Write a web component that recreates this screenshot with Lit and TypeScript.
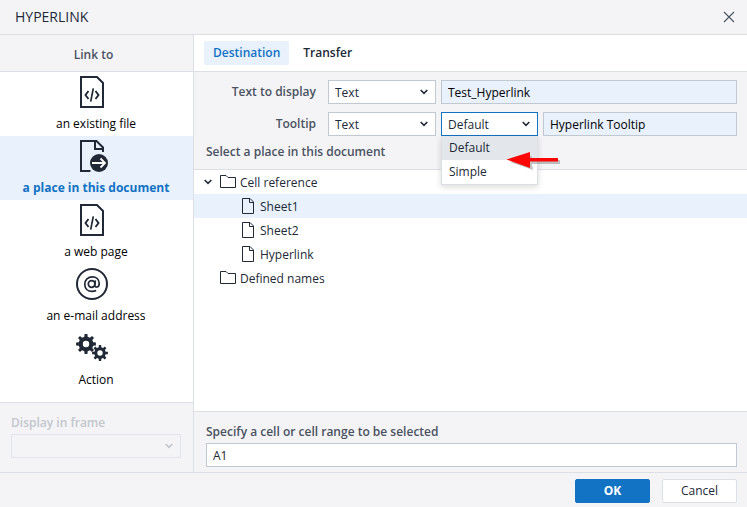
import { LitElement, html, css, svg, nothing } from "lit";
import { customElement, state } from "lit/decorators.js";
import { classMap } from "lit/directives/class-map.js";

/** Outline of a cog wheel with a round hole, as SVG path data. */
function cog(cx: number, cy: number, outer: number, inner: number, hole: number, teeth = 8): string {
  const step = (Math.PI * 2) / teeth;
  const at = (r: number, a: number) =>
    `${(cx + r * Math.cos(a)).toFixed(2)} ${(cy + r * Math.sin(a)).toFixed(2)}`;
  const points: string[] = [];
  for (let i = 0; i < teeth; i++) {
    const a = i * step;
    points.push(
      at(inner, a - step * 0.29),
      at(outer, a - step * 0.18),
      at(outer, a + step * 0.18),
      at(inner, a + step * 0.29),
    );
  }
  return (
    `M${points.join("L")}Z` +
    `M${cx - hole} ${cy}a${hole} ${hole} 0 1 0 ${hole * 2} 0a${hole} ${hole} 0 1 0 ${-hole * 2} 0Z`
  );
}

const codeFile = svg`
  <path d="M5 1H21L27 7V31H5Z" fill="none" stroke="currentColor" stroke-width="2"/>
  <path d="M12.500 15L9.500 19L12.500 23M19.500 15L22.500 19L19.500 23" fill="none" stroke="currentColor" stroke-width="1.9"/>
  <path d="M17.300 12.300L14.700 25.700" fill="none" stroke="currentColor" stroke-width="1.7"/>`;

const placeFile = svg`
  <path d="M14.500 31H5V1H20.500L27 7.500V12" fill="none" stroke="currentColor" stroke-width="2"/>
  <path d="M19 1V9H27" fill="none" stroke="currentColor" stroke-width="2"/>
  <circle cx="23" cy="23" r="9" fill="currentColor"/>
  <path d="M16 23H29M24.500 18.500L29 23L24.500 27.500" fill="none" stroke="#fff" stroke-width="1.8"/>`;

const mail = svg`
  <circle cx="16" cy="16" r="15" fill="none" stroke="currentColor" stroke-width="2"/>
  <circle cx="15.600" cy="16" r="3.300" fill="none" stroke="currentColor" stroke-width="1.7"/>
  <path d="M19.300 12.300L18.800 17.400C18.700 19.800 23.200 20 23.200 15.400C23.200 11.400 20.200 8.800 16.300 8.800C12 8.800 8.800 12 8.800 16.200C8.800 20.600 11.800 23.400 16 23.400C17.600 23.400 18.900 23.100 20.200 22.500" fill="none" stroke="currentColor" stroke-width="1.7"/>`;

const gears = svg`
  <path d="${cog(10, 12, 10, 7.4, 3.2)}" fill="currentColor" fill-rule="evenodd"/>
  <path d="${cog(24, 21, 8, 5.8, 2.7)}" fill="currentColor" fill-rule="evenodd"/>`;

const targets = [
  { label: "an existing file", icon: codeFile },
  { label: "a place in this document", icon: placeFile },
  { label: "a web page", icon: codeFile },
  { label: "an e-mail address", icon: mail },
  { label: "Action", icon: gears },
];

const folder = html`<svg class="folder" width="16" height="14" viewBox="0 0 16 14" aria-hidden="true">
  <path d="M.5 12.5V.5H6L8 2.5H15.5V12.5Z" fill="none" stroke="currentColor" stroke-width="1"/>
</svg>`;

const sheet = html`<svg class="sheet" width="12" height="16" viewBox="0 0 12 16" aria-hidden="true">
  <path d="M.5 .5H8L11.5 4V15.5H.5Z M7.5 .5V4.5H11.5" fill="none" stroke="currentColor" stroke-width="1"/>
</svg>`;

const chevron = html`<svg class="chevron" width="8" height="6" viewBox="0 0 8 6" aria-hidden="true">
  <path d="M.7 1L4 4.3L7.3 1" fill="none" stroke="currentColor" stroke-width="1.6"/>
</svg>`;

@customElement("app-root")
export class AppRoot extends LitElement {
  @state() private target = 1;
  @state() private tab = "Destination";
  @state() private node = "Sheet1";
  @state() private mode = "Default";
  @state() private menuOpen = true;

  static styles = css`
    :host {
      display: flex;
      flex-direction: column;
      min-height: 100vh;
      box-sizing: border-box;
      background: #f4f4f7;
      color: #212936;
      font: 12px/16px "Open Sans", "Noto Sans", sans-serif;
    }
    *, *::before, *::after { box-sizing: border-box; }
    button, input, select { font: inherit; color: inherit; margin: 0; }
    button { border: 0; padding: 0; background: none; }
    svg { display: block; flex: none; }
    ul { list-style: none; margin: 0; padding: 0; }

    .titlebar {
      display: flex;
      align-items: center;
      justify-content: space-between;
      height: 35px;
      padding: 0 12px 0 15px;
      border-bottom: 1px solid #dcdfe4;
    }
    .titlebar button { color: #4a5260; }
    h1 { margin: 0; font-size: 14px; font-weight: 400; line-height: 20px; }

    .body { flex: 1; display: grid; grid-template-columns: 194px 1fr; }
    .sidebar, .main { display: flex; flex-direction: column; min-width: 0; }
    .sidebar { border-right: 1px solid #dcdfe4; }

    .caption, .field-label { font-weight: 600; color: #4a5260; }
    h2.caption {
      margin: 0;
      height: 37px;
      padding: 4px 6px 0 0;
      font-size: 12px;
      line-height: 32px;
      text-align: center;
      border-bottom: 1px solid #dcdfe4;
    }
    .targets { flex: 1; background: #fff; }
    .target {
      display: flex;
      flex-direction: column;
      align-items: center;
      width: 100%;
      height: 64px;
      padding: 4px 1px 0 0;
      gap: 8px;
      color: #000;
    }
    .target svg { margin-right: 8px; color: #212936; }
    .target.active { background: #e8f1fc; color: #1272c4; font-weight: 700; }
    .frame {
      display: flex;
      flex-direction: column;
      gap: 3px;
      height: 70px;
      padding: 12px 12px 0 11px;
      border-top: 1px solid #dcdfe4;
      color: #c3c6cb;
    }
    .frame .field-label { color: #c3c6cb; }

    .tabs {
      display: flex;
      gap: 14px;
      height: 37px;
      padding: 6px 10px;
      background: #fff;
      border-bottom: 1px solid #dcdfe4;
    }
    .tab { height: 24px; font-weight: 600; border-radius: 2px; }
    .tab.active { padding: 0 9px; background: #e8f1fc; color: #1272c4; }

    .form {
      display: grid;
      grid-template-columns: 117px 108px 97px 1fr;
      gap: 8px 5px;
      padding: 8px 10px 0 12px;
      height: 98px;
      align-content: start;
      border-bottom: 1px solid #dcdfe4;
    }
    .form > .field-label { margin-right: 7px; line-height: 24px; text-align: right; }
    .form > .wide { grid-column: span 2; }
    .form > .section {
      grid-column: 1 / -1;
      height: auto;
      padding: 0;
      line-height: 16px;
      text-align: left;
      border: 0;
    }

    .text {
      width: 100%;
      height: 24px;
      padding: 0 6px;
      border: 1px solid #c0c9d1;
      border-radius: 0;
      background: #fff;
      outline: 0;
    }
    .text.filled { background: #e8f1fc; color: #000; }
    .combo { position: relative; display: grid; align-items: center; }
    .combo > select, .combo > .chevron { grid-area: 1 / 1; }
    .combo > .chevron { justify-self: end; margin-right: 8px; pointer-events: none; }
    select {
      appearance: none;
      width: 100%;
      height: 24px;
      padding: 1px 20px 0 6px;
      border: 1px solid #c0c9d1;
      border-radius: 0;
      background: #fff;
      outline: 0;
    }
    select.open { border-color: #1272c4; }
    select:disabled { opacity: 1; background: transparent; border-color: #e1e4ea; }
    .menu {
      position: absolute;
      z-index: 1;
      top: 100%;
      left: 0;
      width: 100%;
      background: #fff;
      border: 1px solid #dcdfe4;
      border-top: 0;
      box-shadow: 0 2px 6px rgb(0 0 0 / 15%);
    }
    .menu li { height: 24px; padding: 0 7px; line-height: 24px; }
    .menu li.active { background: #e3e6eb; }
    .pointer { position: absolute; z-index: 2; top: 38px; left: 64px; pointer-events: none; }

    .tree { flex: 1; background: #fff; }
    .row { display: flex; align-items: center; width: 100%; height: 24px; padding-left: 10px; gap: 4px; }
    .row .toggle { display: flex; justify-content: center; width: 8px; margin-right: 4px; }
    .row .name { padding-top: 2px; }
    .row.child { padding-left: 48px; gap: 6px; }
    .row.active { background: #e8f1fc; }

    .range {
      display: flex;
      flex-direction: column;
      gap: 3px;
      height: 61px;
      padding: 12px 10px 0 12px;
      border-top: 1px solid #dcdfe4;
    }

    .footer {
      display: flex;
      justify-content: flex-end;
      gap: 12px;
      height: 35px;
      padding: 6px 10px 0;
      border-top: 1px solid #dcdfe4;
    }
    .action {
      width: 75px;
      height: 24px;
      border: 1px solid #dcdfe4;
      border-radius: 2px;
      background: #fff;
    }
    .action.primary { border-color: #1272c4; background: #1272c4; color: #fff; font-weight: 700; }
  `;

  private sheetRow(name: string) {
    return html`<li role="none">
      <button class=${classMap({ row: true, child: true, active: this.node === name })}
        role="treeitem" aria-selected=${this.node === name} @click=${() => (this.node = name)}>
        ${sheet}<span class="name">${name}</span>
      </button>
    </li>`;
  }

  private pick(mode: string) {
    this.mode = mode;
    this.menuOpen = false;
  }

  render() {
    return html`
      <header class="titlebar">
        <h1>HYPERLINK</h1>
        <button aria-label="Close">
          <svg width="12" height="12" viewBox="0 0 12 12" aria-hidden="true">
            <path d="M1 1L11 11M11 1L1 11" stroke="currentColor" stroke-width="1.1"/>
          </svg>
        </button>
      </header>

      <div class="body">
        <nav class="sidebar">
          <h2 class="caption">Link to</h2>
          <div class="targets">
            ${targets.map((t, i) => html`
              <button class=${classMap({ target: true, active: i === this.target })}
                @click=${() => (this.target = i)}>
                <svg width="32" height="32" viewBox="0 0 32 32" aria-hidden="true">${t.icon}</svg>
                <span>${t.label}</span>
              </button>`)}
          </div>
          <div class="frame">
            <label class="field-label" for="frame">Display in frame</label>
            <div class="combo">
              <select id="frame" disabled></select>
              ${chevron}
            </div>
          </div>
        </nav>

        <main class="main">
          <div class="tabs" role="tablist">
            ${["Destination", "Transfer"].map((name) => html`
              <button class=${classMap({ tab: true, active: name === this.tab })} role="tab"
                aria-selected=${name === this.tab} @click=${() => (this.tab = name)}>${name}</button>`)}
          </div>

          <div class="form">
            <label class="field-label" for="display">Text to display</label>
            <div class="combo">
              <select aria-label="Text to display type"><option>Text</option></select>
              ${chevron}
            </div>
            <input id="display" class="text filled wide" type="text" value="Test_Hyperlink">

            <label class="field-label" for="tooltip">Tooltip</label>
            <div class="combo">
              <select aria-label="Tooltip type"><option>Text</option></select>
              ${chevron}
            </div>
            <div class="combo">
              <select class=${classMap({ open: this.menuOpen })} aria-label="Tooltip mode" .value=${this.mode}>
                <option>Default</option>
                <option>Simple</option>
              </select>
              ${chevron}
              ${this.menuOpen ? html`
                <ul class="menu" role="listbox" aria-label="Tooltip mode">
                  ${["Default", "Simple"].map((m) => html`
                    <li class=${classMap({ active: m === this.mode })} role="option"
                      aria-selected=${m === this.mode} @click=${() => this.pick(m)}>${m}</li>`)}
                </ul>` : nothing}
              <svg class="pointer" width="58" height="24" viewBox="0 0 58 24" aria-hidden="true">
                <path d="M5 12L27 6L26 10H55V14H27L28 20Z" fill="#777" opacity=".45"/>
                <path d="M1.500 9.500L25 2V8H53V11.500H25V18Z" fill="#fb0505"/>
              </svg>
            </div>
            <input id="tooltip" class="text filled" type="text" value="Hyperlink Tooltip">

            <h2 class="caption section">Select a place in this document</h2>
          </div>

          <ul class="tree" role="tree" aria-label="Select a place in this document">
            <li role="none">
              <button class="row" role="treeitem" aria-expanded="true">
                <span class="toggle">${chevron}</span>${folder}<span class="name">Cell reference</span>
              </button>
              <ul role="group">
                ${["Sheet1", "Sheet2", "Hyperlink"].map((name) => this.sheetRow(name))}
              </ul>
            </li>
            <li role="none">
              <button class="row" role="treeitem">
                <span class="toggle"></span>${folder}<span class="name">Defined names</span>
              </button>
            </li>
          </ul>

          <div class="range">
            <label class="field-label" for="range">Specify a cell or cell range to be selected</label>
            <input id="range" class="text" type="text" value="A1">
          </div>
        </main>
      </div>

      <footer class="footer">
        <button class="action primary">OK</button>
        <button class="action">Cancel</button>
      </footer>
    `;
  }
}
